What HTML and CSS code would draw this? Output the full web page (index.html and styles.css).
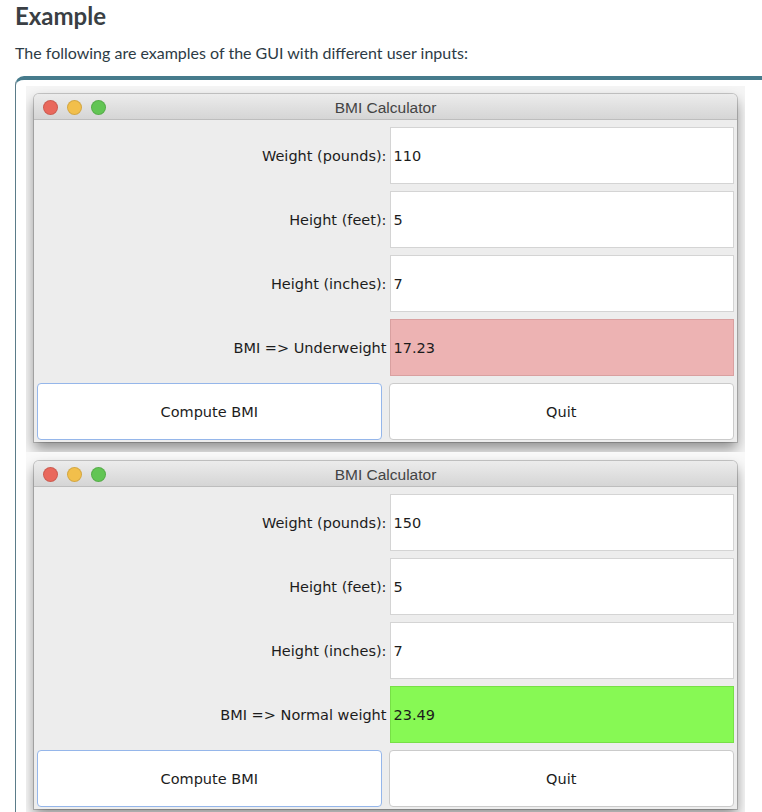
FILE: index.html
```html
<!DOCTYPE html>
<html lang="en">
<head>
  <meta charset="UTF-8">
  <meta name="viewport" content="width=device-width, initial-scale=1.0">
  <title>Example</title>
  <link rel="stylesheet" href="styles.css">
</head>
<body>

<h1 class="heading">Example</h1>
<p class="lead">The following are examples of the GUI with different user inputs:</p>

<div class="example-box">
  <div class="shot">
    <div class="window">
      <div class="titlebar">
        <div class="lights">
          <span class="light red"></span>
          <span class="light yellow"></span>
          <span class="light green"></span>
        </div>
        <div class="win-title">BMI Calculator</div>
      </div>
      <div class="form">
        <div class="label">Weight (pounds):</div>
        <div class="field">110</div>
        <div class="label">Height (feet):</div>
        <div class="field">5</div>
        <div class="label">Height (inches):</div>
        <div class="field">7</div>
        <div class="label">BMI =&gt; Underweight</div>
        <div class="field underweight">17.23</div>
        <button class="btn focused">Compute BMI</button>
        <button class="btn">Quit</button>
      </div>
    </div>
  </div>

  <div class="shot second">
    <div class="window">
      <div class="titlebar">
        <div class="lights">
          <span class="light red"></span>
          <span class="light yellow"></span>
          <span class="light green"></span>
        </div>
        <div class="win-title">BMI Calculator</div>
      </div>
      <div class="form">
        <div class="label">Weight (pounds):</div>
        <div class="field">150</div>
        <div class="label">Height (feet):</div>
        <div class="field">5</div>
        <div class="label">Height (inches):</div>
        <div class="field">7</div>
        <div class="label">BMI =&gt; Normal weight</div>
        <div class="field normal">23.49</div>
        <button class="btn focused">Compute BMI</button>
        <button class="btn">Quit</button>
      </div>
    </div>
  </div>
</div>

</body>
</html>
```

FILE: styles.css
```css
html,
body {
  overflow: hidden;
}

body {
  margin: 0;
  padding: 0 0 0 15px;
  background-color: #fff;
  color: #2d3b45;
  font-family: Lato, 'Liberation Sans', sans-serif;
}

.heading {
  margin: 0;
  font-size: 24px;
  line-height: 32px;
  font-weight: bold;
  color: #3a3f44;
}

.lead {
  margin: 10px 0 0;
  font-size: 16px;
  line-height: 21px;
  color: #2d3b45;
}

.example-box {
  margin-top: 13px;
  border-top: 4px solid #467b8c;
  border-left: 1px solid #5b7c89;
  border-top-left-radius: 9px;
  padding: 6px 0 0 10px;
}

.shot {
  width: 703px;
  padding: 8px 8px 10px;
  background-color: #f5f5f5;
  overflow: hidden;
}

.shot.second {
  padding-top: 9px;
  background-color: #f9f9f9;
}

.window {
  width: 703px;
  border-radius: 5px 5px 0 0;
  background-color: #ededed;
  box-shadow: 0 7px 14px rgba(0, 0, 0, 0.42), 0 0 0 1px #c9c9c9;
}

.titlebar {
  display: grid;
  grid-template-columns: 1fr auto 1fr;
  align-items: center;
  height: 25px;
  border-bottom: 1px solid #bdbdbd;
  border-radius: 5px 5px 0 0;
  background: linear-gradient(#ececec, #d5d5d5);
}

.lights {
  display: flex;
  gap: 9px;
  padding-left: 9px;
  padding-top: 2px;
}

.light {
  width: 13px;
  height: 13px;
  border-radius: 50%;
  border: 0.5px solid rgba(0, 0, 0, 0.12);
}

.light.red {
  background-color: #e9685c;
}

.light.yellow {
  background-color: #f2bf4b;
}

.light.green {
  background-color: #62c554;
}

.win-title {
  padding-top: 3px;
  font-family: 'Liberation Sans', Arial, sans-serif;
  font-size: 15.5px;
  color: #444;
}

.form {
  display: grid;
  grid-template-columns: 1fr 1fr;
  grid-auto-rows: 57px;
  column-gap: 7px;
  row-gap: 7px;
  padding: 7px 3px 2px 2px;
  font-family: 'DejaVu Sans', sans-serif;
  font-size: 14.5px;
  color: #1c1c1c;
}

.label {
  display: flex;
  align-items: center;
  justify-content: flex-end;
  margin-right: -5px;
  white-space: nowrap;
}

.field {
  display: flex;
  align-items: center;
  padding-left: 3px;
  margin-left: 1px;
  background-color: #fff;
  border: 1px solid #d4d4d4;
}

.field.underweight {
  background-color: #edb3b3;
  border-color: #d9a0a0;
}

.field.normal {
  background-color: #87f954;
  border-color: #77e046;
}

.btn {
  font-family: 'DejaVu Sans', sans-serif;
  font-size: 14.5px;
  color: #1c1c1c;
  background-color: #fff;
  border: 1px solid #cbcbcb;
  border-radius: 4px;
  padding: 0;
}

.btn.focused {
  margin-left: 1px;
  border: 1.5px solid #95b6ea;
}
```
